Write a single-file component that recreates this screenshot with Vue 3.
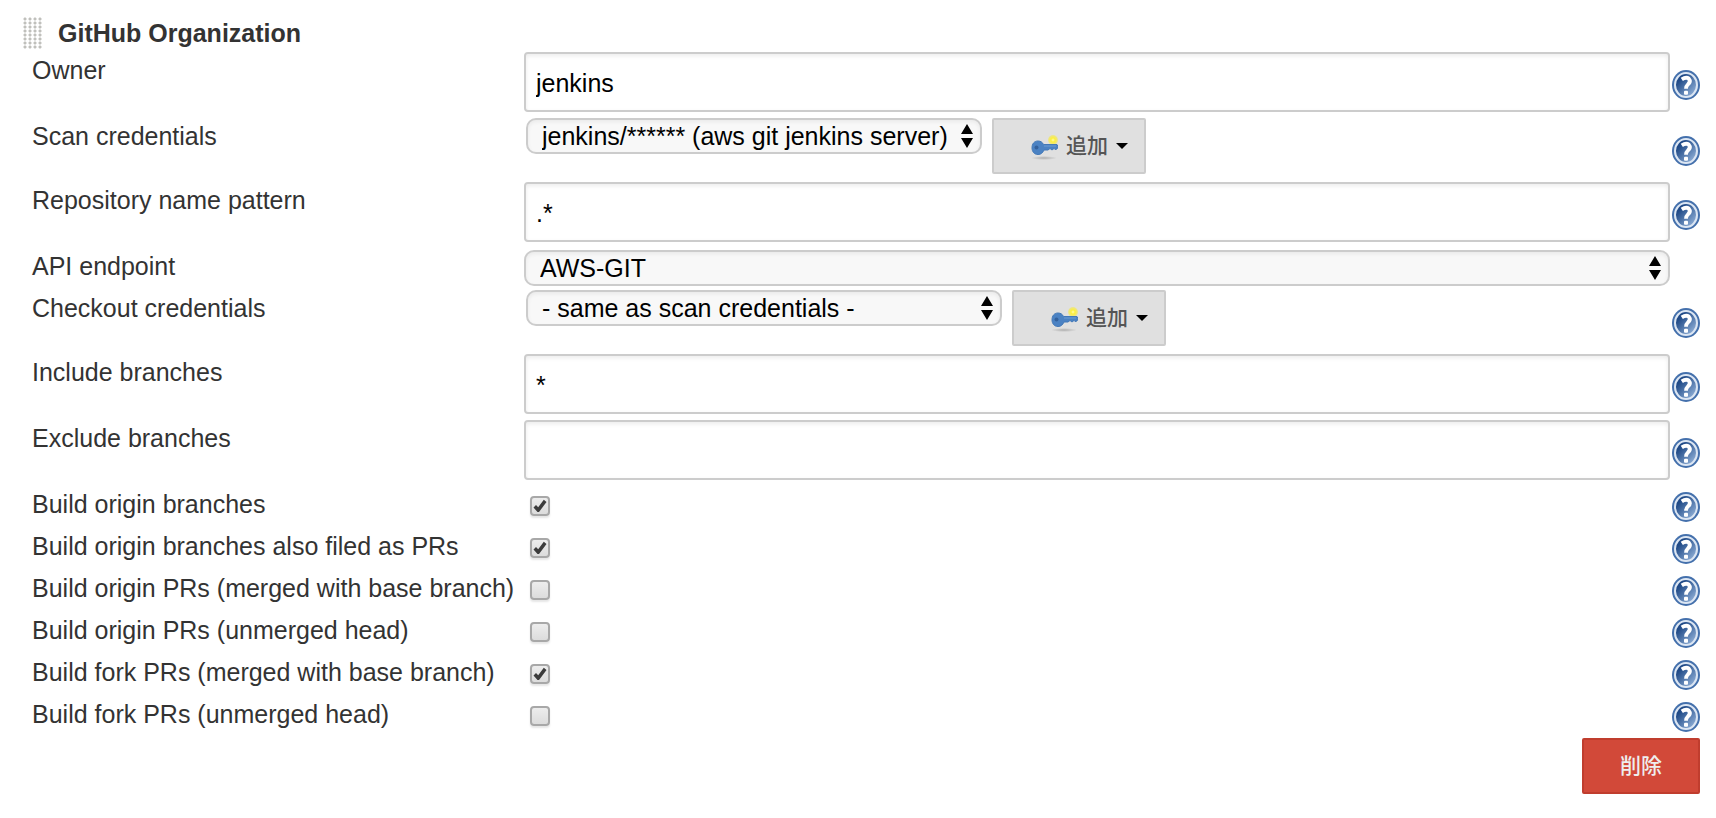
<script setup>
import { ref } from "vue";

const fields = ref([
  { id: "owner", label: "Owner", type: "text", value: "jenkins", help: true },
  {
    id: "scan-credentials",
    label: "Scan credentials",
    type: "credentials",
    value: "jenkins/****** (aws git jenkins server)",
    options: ["jenkins/****** (aws git jenkins server)"],
    help: true,
  },
  { id: "pattern", label: "Repository name pattern", type: "text", value: ".*", help: true },
  {
    id: "api-endpoint",
    label: "API endpoint",
    type: "select",
    value: "AWS-GIT",
    options: ["AWS-GIT"],
    help: false,
  },
  {
    id: "checkout-credentials",
    label: "Checkout credentials",
    type: "credentials",
    value: "- same as scan credentials -",
    options: ["- same as scan credentials -", "jenkins/****** (aws git jenkins server)"],
    help: true,
  },
  { id: "include", label: "Include branches", type: "text", value: "*", help: true },
  { id: "exclude", label: "Exclude branches", type: "text", value: "", help: true },
  { id: "origin", label: "Build origin branches", type: "checkbox", value: true, help: true },
  {
    id: "origin-pr",
    label: "Build origin branches also filed as PRs",
    type: "checkbox",
    value: true,
    help: true,
  },
  {
    id: "origin-merge",
    label: "Build origin PRs (merged with base branch)",
    type: "checkbox",
    value: false,
    help: true,
  },
  {
    id: "origin-head",
    label: "Build origin PRs (unmerged head)",
    type: "checkbox",
    value: false,
    help: true,
  },
  {
    id: "fork-merge",
    label: "Build fork PRs (merged with base branch)",
    type: "checkbox",
    value: true,
    help: true,
  },
  {
    id: "fork-head",
    label: "Build fork PRs (unmerged head)",
    type: "checkbox",
    value: false,
    help: true,
  },
]);
</script>

<template>
  <form class="source-config" @submit.prevent>
    <!-- gradients shared by the icons -->
    <svg class="defs" width="0" height="0" aria-hidden="true">
      <defs>
        <linearGradient id="help-blue" x1="0" y1="0" x2="1" y2="1">
          <stop offset="0.25" stop-color="#204a87" />
          <stop offset="1" stop-color="#a4c2e6" />
        </linearGradient>
        <radialGradient id="key-shadow">
          <stop offset="0" stop-color="#999" stop-opacity="0.7" />
          <stop offset="1" stop-color="#999" stop-opacity="0" />
        </radialGradient>
        <radialGradient id="key-spark">
          <stop offset="0" stop-color="#fffbb0" />
          <stop offset="0.4" stop-color="#fdf03c" />
          <stop offset="1" stop-color="#f8ea30" stop-opacity="0.4" />
        </radialGradient>
      </defs>
    </svg>

    <header class="config-header">
      <span class="drag-handle"></span>
      <b class="config-title">GitHub Organization</b>
    </header>

    <!-- 設定項目 -->
    <div v-for="field in fields" :key="field.id" class="row" :class="'row-' + field.type">
      <label class="row-label" :for="field.id">{{ field.label }}</label>

      <div class="row-control">
        <input
          v-if="field.type === 'text'"
          :id="field.id"
          v-model="field.value"
          class="text-input"
          type="text"
        />
        <span v-else-if="field.type === 'checkbox'" class="check">
          <input :id="field.id" v-model="field.value" type="checkbox" />
          <svg v-if="field.value" class="check-mark" viewBox="0 0 20 20" aria-hidden="true">
            <path d="M3.500 11.500 6 9 8.200 11.200 13.800 3.800 16.500 6 9 16H7.500z" />
          </svg>
        </span>
        <template v-else>
          <span class="select-wrap">
            <select :id="field.id" v-model="field.value">
              <option v-for="option in field.options" :key="option">{{ option }}</option>
            </select>
            <svg class="select-arrows" viewBox="0 0 12 24" aria-hidden="true">
              <path d="M6 0 12 10H0zM6 24 0 14h12z" />
            </svg>
          </span>
          <button v-if="field.type === 'credentials'" class="add-button" type="button">
            <svg class="key-icon" viewBox="0 0 28 28" aria-hidden="true">
              <ellipse cx="14" cy="26" rx="13" ry="2" fill="url(#key-shadow)" />
              <circle cx="23" cy="8" r="5" fill="url(#key-spark)" />
              <path
                d="M8 9c3 0 4.500 1.500 5.500 3.500H27l1 2-1 2.500-2 .5-1-1-2 1.500-2-1.500-2 1.500h-4C12.500 21 11 22.500 8 22.500c-4 0-6-3-6-6.700S4 9 8 9z"
                fill="#4b82c3"
                stroke="#4379b8"
              />
              <path d="M14 14h12" stroke="#6d9bd1" />
              <circle cx="6.500" cy="15.500" r="2" fill="#33619c" />
            </svg>
            <span>追加</span>
            <svg class="caret" viewBox="0 0 12 6" aria-hidden="true"><path d="M0 0h12L6 6z" /></svg>
          </button>
        </template>
      </div>

      <a v-if="field.help" class="help-link" href="#" :aria-label="'Help: ' + field.label">
        <svg viewBox="0 0 28 30" aria-hidden="true">
          <ellipse cx="14" cy="15" rx="14" ry="15" fill="#4470ac" />
          <ellipse cx="14" cy="15" rx="11" ry="12" fill="url(#help-blue)" stroke="#dce6f3" stroke-width="2" />
          <path
            d="M9.800 9.400Q14 6.500 16.800 8.600Q19.200 11.500 16 14.400Q14 16.200 14 18.800"
            fill="none"
            stroke="#fff"
            stroke-width="3.800"
          />
          <rect x="12" y="20.800" width="4" height="4" rx="1" fill="#fff" />
        </svg>
      </a>
    </div>

    <footer class="config-footer">
      <button class="delete-button" type="button">削除</button>
    </footer>
  </form>
</template>

<style>
body {
  margin: 0;
  background-color: #fff;
}
</style>

<style scoped>
.source-config {
  padding: 14px 16px 24px 22px;
  color: #333;
  font-family: "Liberation Sans", "Noto Sans CJK JP", sans-serif;
  font-size: 25px;
  line-height: 32px;
}
.defs {
  position: absolute;
}

/* 標題 */
.config-header {
  display: flex;
  align-items: center;
  gap: 16px;
  height: 38px;
}
.drag-handle {
  width: 20px;
  height: 32px;
  background-image: radial-gradient(circle at 3px 2px, #c0c0bc 1px, transparent 2px);
  background-size: 5px 4px;
}

/* 每一列 */
.row {
  display: grid;
  grid-template-columns: 492px 1fr 30px;
  align-items: start;
  min-height: 42px;
  margin-left: 10px;
}
.row-label {
  padding-top: 2px;
  white-space: nowrap;
}
.row-control {
  display: flex;
  align-items: flex-start;
}
.row-text {
  padding-bottom: 6px;
}
.row-credentials {
  padding-bottom: 8px;
}
.row-select {
  min-height: 40px;
  padding-top: 2px;
}
.row-select .row-label {
  padding-top: 0;
}
.row-credentials .row-control {
  gap: 10px;
  padding-left: 2px;
}

/* 輸入欄位 */
.text-input {
  box-sizing: border-box;
  width: 100%;
  height: 60px;
  padding: 4px 10px 2px;
  border: 2px solid #ccc;
  border-radius: 4px;
  box-shadow: inset 0 2px 4px rgba(0, 0, 0, 0.08);
  color: #000;
  font: inherit;
}
.select-wrap {
  display: flex;
  position: relative;
}
.row-select .select-wrap {
  width: 100%;
}
select {
  appearance: none;
  box-sizing: border-box;
  width: 100%;
  height: 36px;
  padding: 0 32px 2px 14px;
  border: 2px solid #ccc;
  border-radius: 10px;
  background-color: #f8f8f8;
  box-shadow: inset 0 2px 4px rgba(0, 0, 0, 0.06);
  color: #000;
  font: inherit;
}
#checkout-credentials {
  min-width: 476px;
}
.select-arrows {
  position: absolute;
  top: 6px;
  right: 9px;
  width: 12px;
  height: 24px;
  pointer-events: none;
}

/* 追加按鈕 */
.add-button {
  display: flex;
  align-items: center;
  box-sizing: border-box;
  height: 56px;
  padding: 0 16px 0 36px;
  border: 2px solid #ccc;
  border-radius: 2px;
  background-color: #e0e0e0;
  color: #555;
  font: inherit;
  font-size: 21px;
  font-weight: 500;
  cursor: pointer;
}
.key-icon {
  width: 28px;
  height: 28px;
  margin-right: 8px;
}
.caret {
  width: 12px;
  height: 6px;
  margin-left: 8px;
}

/* 核取方塊 */
.check {
  display: flex;
  position: relative;
  margin: 10px 6px;
}
.check input {
  appearance: none;
  box-sizing: border-box;
  width: 20px;
  height: 20px;
  margin: 0;
  border: 2px solid #a8a8a8;
  border-radius: 4px;
  background-image: linear-gradient(#ededed, #dcdcdc);
  box-shadow: 0 2px 2px rgba(0, 0, 0, 0.1);
}
.check-mark {
  position: absolute;
  inset: 0;
  pointer-events: none;
}
.check-mark path {
  fill: #3c3c3c;
}

/* 說明圖示 */
.help-link {
  display: flex;
  padding: 18px 0 0 2px;
}
.row-checkbox .help-link {
  padding-top: 6px;
}
.help-link svg {
  width: 28px;
  height: 30px;
}

/* 刪除按鈕 */
.config-footer {
  display: flex;
  justify-content: flex-end;
}
.delete-button {
  height: 56px;
  padding: 0 36px;
  border: 2px solid #c03d2e;
  border-radius: 2px;
  background-color: #d24939;
  color: #eee;
  font: inherit;
  font-size: 21px;
  font-weight: 500;
  cursor: pointer;
}
</style>
